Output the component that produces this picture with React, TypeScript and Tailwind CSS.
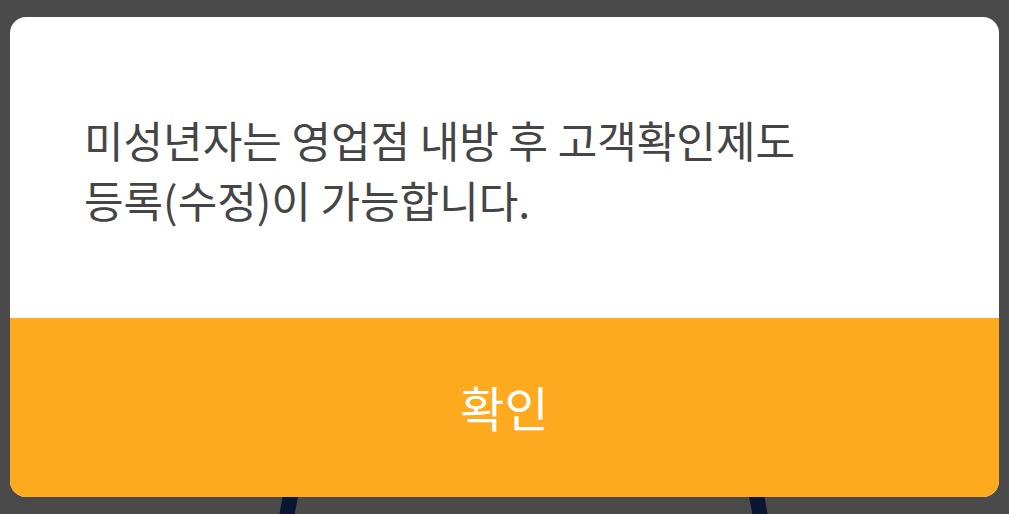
import React from 'react';

const App = () => {
  return (
    <div className="relative h-[514px] w-[1009px] overflow-hidden bg-[#4a4a4a] font-['Noto_Sans_CJK_KR','Noto_Sans',sans-serif]">
      {/* page content behind the dimmed overlay */}
      <div className="absolute left-[277px] top-[303px] h-[493px] w-[493px] rounded-full border-[15px] border-[#0a1632]" />

      <div className="relative px-[10px] pt-[17px]">
        <div className="flex h-[480px] flex-col overflow-hidden rounded-[16px] bg-white">
          <div className="h-[301px] pl-[74px] pt-[92px]">
            <p className="text-[43px] leading-[60px] text-[#454545]">
              미성년자는 영업점 내방 후 고객확인제도
              <br />
              등록(수정)이 가능합니다.
            </p>
          </div>
          <button className="flex flex-1 items-center justify-center bg-[#fdaa1f] pb-[4px] text-[48px] text-white">
            확인
          </button>
        </div>
      </div>
    </div>
  );
};

export default App;
